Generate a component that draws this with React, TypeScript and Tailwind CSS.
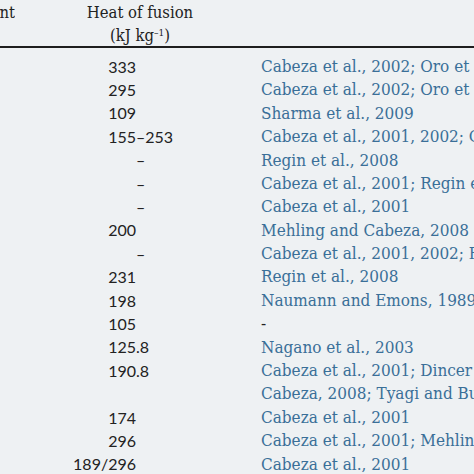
type Row = {
  whole: string;
  rest?: string;
  refs: string;
  plain?: boolean;
};

const rows: Row[] = [
  { whole: '333', refs: 'Cabeza et al., 2002; Oro et al., 2012' },
  { whole: '295', refs: 'Cabeza et al., 2002; Oro et al., 2012' },
  { whole: '109', refs: 'Sharma et al., 2009' },
  { whole: '155', rest: '–253', refs: 'Cabeza et al., 2001, 2002; Gil et al., 2010' },
  { whole: '', rest: '–', refs: 'Regin et al., 2008' },
  { whole: '', rest: '–', refs: 'Cabeza et al., 2001; Regin et al., 2008' },
  { whole: '', rest: '–', refs: 'Cabeza et al., 2001' },
  { whole: '200', refs: 'Mehling and Cabeza, 2008' },
  { whole: '', rest: '–', refs: 'Cabeza et al., 2001, 2002; Regin et al., 2008' },
  { whole: '231', refs: 'Regin et al., 2008' },
  { whole: '198', refs: 'Naumann and Emons, 1989' },
  { whole: '105', refs: '-', plain: true },
  { whole: '125', rest: '.8', refs: 'Nagano et al., 2003' },
  { whole: '190', rest: '.8', refs: 'Cabeza et al., 2001; Dincer and Rosen, 2002; Mehling and' },
  { whole: '', refs: 'Cabeza, 2008; Tyagi and Buddhi, 2007' },
  { whole: '174', refs: 'Cabeza et al., 2001' },
  { whole: '296', refs: 'Cabeza et al., 2001; Mehling and Cabeza, 2008' },
  { whole: '189/296', refs: 'Cabeza et al., 2001' },
];

export default function App() {
  return (
    <main className="h-[474px] w-[474px] overflow-hidden bg-[#eef1f3] text-[#222]">
      <header className="flex h-[46px] pt-[1px] font-['DejaVu_Serif',serif] font-stretch-condensed text-[16.5px] leading-[23px]">
        <div className="flex w-[15px] shrink-0 justify-end overflow-hidden">
          <span className="whitespace-nowrap">Melting point</span>
        </div>
        <div className="flex w-[250px] shrink-0 flex-col items-center">
          <span>Heat of fusion</span>
          <span>
            (kJ kg<sup className="text-[10px]">–1</sup>)
          </span>
        </div>
      </header>

      <div className="h-[2px] w-full bg-[#1e1e1e]" />

      <div className="pt-[7px]">
        {rows.map((row, i) => (
          <div key={i} className="flex h-[23.4px] items-center">
            <div className="flex w-[136px] shrink-0 justify-end font-['Lato',sans-serif] text-[16px]">
              {row.whole}
            </div>
            <div className="w-[125px] shrink-0 font-['Lato',sans-serif] text-[16px]">{row.rest}</div>
            <div
              className={`shrink-0 whitespace-nowrap font-['DejaVu_Serif',serif] font-stretch-condensed text-[17px] ${
                row.plain ? 'text-[#222]' : 'text-[#3a6f98]'
              }`}
            >
              {row.refs}
            </div>
          </div>
        ))}
      </div>
    </main>
  );
}
